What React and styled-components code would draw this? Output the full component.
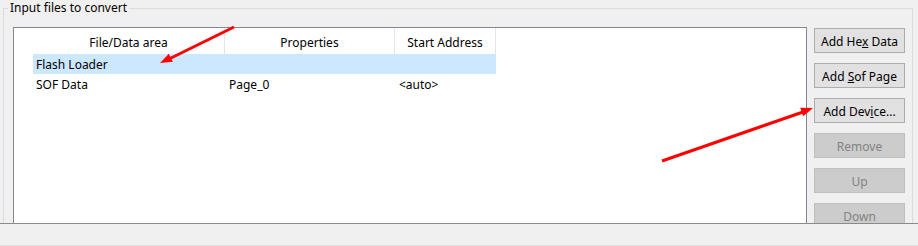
import React from 'react';
import styled, { createGlobalStyle } from 'styled-components';

const GlobalStyle = createGlobalStyle`
  html, body {
    margin: 0;
    padding: 0;
    background: #f0f0f0;
  }
  body {
    font-family: 'Noto Sans', 'Liberation Sans', sans-serif;
    font-size: 12px;
    color: #000;
  }
`;

const Page = styled.div`
  position: relative;
  width: 918px;
  height: 246px;
  display: flex;
  flex-direction: column;
  background: #f0f0f0;
  overflow: hidden;
`;

const Workspace = styled.div`
  height: 223px;
  overflow: hidden;
  padding: 0 5px 0 3px;
`;

const GroupBox = styled.fieldset`
  margin: 0;
  padding: 11px 7px 0 9px;
  border: 1px solid #dcdcdc;
  height: 260px;
  box-sizing: border-box;
  display: flex;
  gap: 7px;
`;

const Legend = styled.legend`
  padding: 0 2px;
  margin-left: -5px;
  line-height: 16px;
  font-size: 12px;
`;

const ListBox = styled.div`
  flex: 1;
  background: #fff;
  border: 1px solid #828790;
  padding: 0 0 0 19px;
`;

const Table = styled.div`
  width: 463px;
`;

const Row = styled.div`
  display: grid;
  grid-template-columns: 192px 170px 101px;
  height: ${(p) => (p.$header ? '26px' : '20px')};
  align-items: center;
  background: ${(p) => (p.$selected ? '#cce8ff' : 'transparent')};
`;

const HeadCell = styled.div`
  height: 100%;
  display: flex;
  align-items: center;
  justify-content: center;
  border-right: 1px solid #e5e5e5;
  box-sizing: border-box;
  padding-top: 2px;
`;

const Cell = styled.div`
  padding-left: ${(p) => (p.$first ? '3px' : '4px')};
  white-space: nowrap;
`;

const ButtonColumn = styled.div`
  width: 91px;
  display: flex;
  flex-direction: column;
  gap: 10px;
  padding-top: 1px;
`;

const Button = styled.button`
  height: 25px;
  width: 91px;
  box-sizing: border-box;
  font-family: inherit;
  font-size: 12px;
  padding: 2px 0 0;
  background: ${(p) => (p.disabled ? '#cccccc' : '#e1e1e1')};
  border: 1px solid ${(p) => (p.disabled ? '#bfbfbf' : '#adadad')};
  color: ${(p) => (p.disabled ? '#838383' : '#000')};
  u {
    text-decoration-thickness: 1px;
  }
`;

const StatusStrip = styled.div`
  flex: 1;
  border-top: 1px solid #8b8b8b;
  border-bottom: 1px solid #dcdcdc;
  background: #f0f0f0;
`;

const Overlay = styled.svg`
  position: absolute;
  left: 0;
  top: 0;
  pointer-events: none;
`;

const rows = [
  { name: 'Flash Loader', props: '', addr: '', selected: true },
  { name: 'SOF Data', props: 'Page_0', addr: '<auto>' },
];

const App = () => (
  <>
    <GlobalStyle />
    <Page>
      <Workspace>
        <GroupBox>
          <Legend>Input files to convert</Legend>
          <ListBox>
            <Table>
              <Row $header>
                <HeadCell>File/Data area</HeadCell>
                <HeadCell>Properties</HeadCell>
                <HeadCell>Start Address</HeadCell>
              </Row>
              {rows.map((r) => (
                <Row key={r.name} $selected={r.selected}>
                  <Cell $first>{r.name}</Cell>
                  <Cell>{r.props}</Cell>
                  <Cell>{r.addr}</Cell>
                </Row>
              ))}
            </Table>
          </ListBox>
          <ButtonColumn>
            <Button>Add He<u>x</u> Data</Button>
            <Button>Add <u>S</u>of Page</Button>
            <Button>Add Dev<u>i</u>ce...</Button>
            <Button disabled>Remove</Button>
            <Button disabled>Up</Button>
            <Button disabled>Down</Button>
          </ButtonColumn>
        </GroupBox>
      </Workspace>
      <StatusStrip />
      <Overlay width="918" height="246" viewBox="0 0 918 246">
        <line x1="234" y1="27" x2="169" y2="59" stroke="#ff0000" strokeWidth="3" />
        <polygon points="160,63 172.8,61.8 168.8,53.7" fill="#ff0000" />
        <line x1="662" y1="161" x2="803" y2="112" stroke="#ff0000" strokeWidth="3" />
        <polygon points="813,108 803.2,116.2 800.2,107.7" fill="#ff0000" />
      </Overlay>
    </Page>
  </>
);

export default App;
